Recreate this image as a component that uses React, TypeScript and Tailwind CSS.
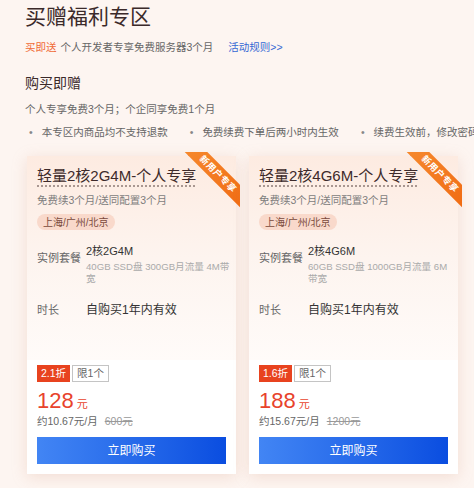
import React from "react";

type Plan = {
  name: string;
  spec: string;
  detail: [string, string];
  discount: string;
  price: string;
  monthly: string;
  original: string;
};

const plans: Plan[] = [
  {
    name: "轻量2核2G4M-个人专享",
    spec: "2核2G4M",
    detail: ["40GB SSD盘 300GB月流量 4M带", "宽"],
    discount: "2.1折",
    price: "128",
    monthly: "约10.67元/月",
    original: "600元",
  },
  {
    name: "轻量2核4G6M-个人专享",
    spec: "2核4G6M",
    detail: ["60GB SSD盘 1000GB月流量 6M", "带宽"],
    discount: "1.6折",
    price: "188",
    monthly: "约15.67元/月",
    original: "1200元",
  },
];

const font = { fontFamily: '"Liberation Sans", "Noto Sans CJK SC", sans-serif' };

function Ribbon() {
  return (
    <div className="absolute top-[-4px] right-[-4px] w-[60px] h-[60px] overflow-hidden">
      {/* fold corners */}
      <div className="absolute top-0 left-[8px] w-0 h-0 border-r-[5px] border-r-[#c24d0a] border-t-[4px] border-t-transparent" />
      <div className="absolute bottom-[8px] right-0 w-0 h-0 border-t-[5px] border-t-[#c24d0a] border-l-[4px] border-l-transparent" />
      <div className="absolute left-[-7px] top-[14px] w-[90px] h-[16px] rotate-45 bg-gradient-to-r from-[#f68a2e] to-[#f06a10] flex items-center justify-center">
        <span className="text-white text-[9px] leading-[16px] font-bold tracking-[0.5px]">
          新用户专享
        </span>
      </div>
    </div>
  );
}

function PlanCard({ plan }: { plan: Plan }) {
  return (
    <div className="relative w-[209px] h-[318px] flex flex-col bg-white shadow-[0_3px_14px_rgba(214,160,135,0.28)]">
      <Ribbon />
      <div className="h-[204px] px-[10px] pt-[10px] bg-gradient-to-b from-[#fdebe1] via-[#fdf4ef] to-[#fffbf9]">
        <div className="text-[15px] leading-[20px] text-[#3d2a2a] underline decoration-dotted decoration-[#8d7b75] underline-offset-[5px] whitespace-nowrap">
          {plan.name}
        </div>
        <div className="mt-[7px] text-[10.5px] leading-[14px] text-[#7d7d7d]">
          免费续3个月/送同配置3个月
        </div>
        <div className="mt-[7px] inline-flex items-center h-[16px] px-[6px] rounded-full bg-[#f9d9cb] text-[10px] text-[#7a4a3b]">
          上海/广州/北京
        </div>
        <div className="mt-[11px] flex">
          <div className="w-[49px] shrink-0 mt-[7px] text-[11px] leading-[14px] text-[#666]">
            实例套餐
          </div>
          <div>
            <div className="text-[11px] leading-[14px] text-[#333]">{plan.spec}</div>
            <div className="mt-[3px] text-[9.6px] leading-[12px] text-[#aaa] whitespace-nowrap">
              {plan.detail[0]}
              <br />
              {plan.detail[1]}
            </div>
          </div>
        </div>
        <div className="mt-[17px] flex items-center">
          <div className="w-[49px] shrink-0 text-[11px] leading-[16px] text-[#666]">时长</div>
          <div className="text-[12px] leading-[16px] text-[#333]">自购买1年内有效</div>
        </div>
      </div>
      <div className="flex-1 px-[10px] pt-[5px] bg-white">
        <div className="flex items-center gap-[2px]">
          <span className="h-[17px] px-[4px] flex items-center bg-[#e8431f] text-white text-[10.5px]">
            {plan.discount}
          </span>
          <span className="h-[17px] px-[4px] flex items-center border border-[#c4c4c4] text-[#666] text-[10.5px]">
            限1个
          </span>
        </div>
        <div className="mt-[7px] flex items-baseline text-[#e8432c]">
          <span className="text-[22px] leading-[24px]">{plan.price}</span>
          <span className="ml-[3px] text-[11px]">元</span>
        </div>
        <div className="mt-[1px] text-[10.5px] leading-[14px] text-[#666]">
          {plan.monthly}
          <span className="ml-[7px] line-through text-[#999]">{plan.original}</span>
        </div>
        <button className="mt-[9px] w-full h-[27px] bg-gradient-to-r from-[#4285f4] to-[#0a4de0] text-white text-[12px]">
          立即购买
        </button>
      </div>
    </div>
  );
}

export default function App() {
  return (
    <div
      className="w-[474px] h-[488px] overflow-hidden bg-[#fdf5f1] pl-[25px] pt-[5px]"
      style={font}
    >
      <h1 className="text-[21px] leading-[24px] text-[#3b2a2a]">买赠福利专区</h1>
      <div className="mt-[11px] flex items-center text-[10.5px] leading-[14px] whitespace-nowrap">
        <span className="text-[#f06a35]">买即送</span>
        <span className="ml-[4px] text-[#666]">个人开发者专享免费服务器3个月</span>
        <span className="ml-[15px] text-[#3568d4]">活动规则&gt;&gt;</span>
      </div>
      <h2 className="mt-[20px] text-[14px] leading-[18px] text-[#3b2a2a]">购买即赠</h2>
      <p className="mt-[10px] text-[10.5px] leading-[14px] text-[#666]">
        个人专享免费3个月；个企同享免费1个月
      </p>
      <ul className="mt-[9px] flex text-[10.5px] leading-[14px] text-[#666] whitespace-nowrap">
        <li className="flex items-center">
          <span className="ml-[4px] mr-[9px] text-[#888]">•</span>本专区内商品均不支持退款
        </li>
        <li className="flex items-center ml-[22px]">
          <span className="mr-[9px] text-[#888]">•</span>免费续费下单后两小时内生效
        </li>
        <li className="flex items-center ml-[22px]">
          <span className="mr-[9px] text-[#888]">•</span>续费生效前，修改密码会导致续费失败
        </li>
      </ul>
      <div className="mt-[17px] ml-[2px] flex gap-[13px]">
        {plans.map((p) => (
          <PlanCard key={p.spec} plan={p} />
        ))}
      </div>
    </div>
  );
}
